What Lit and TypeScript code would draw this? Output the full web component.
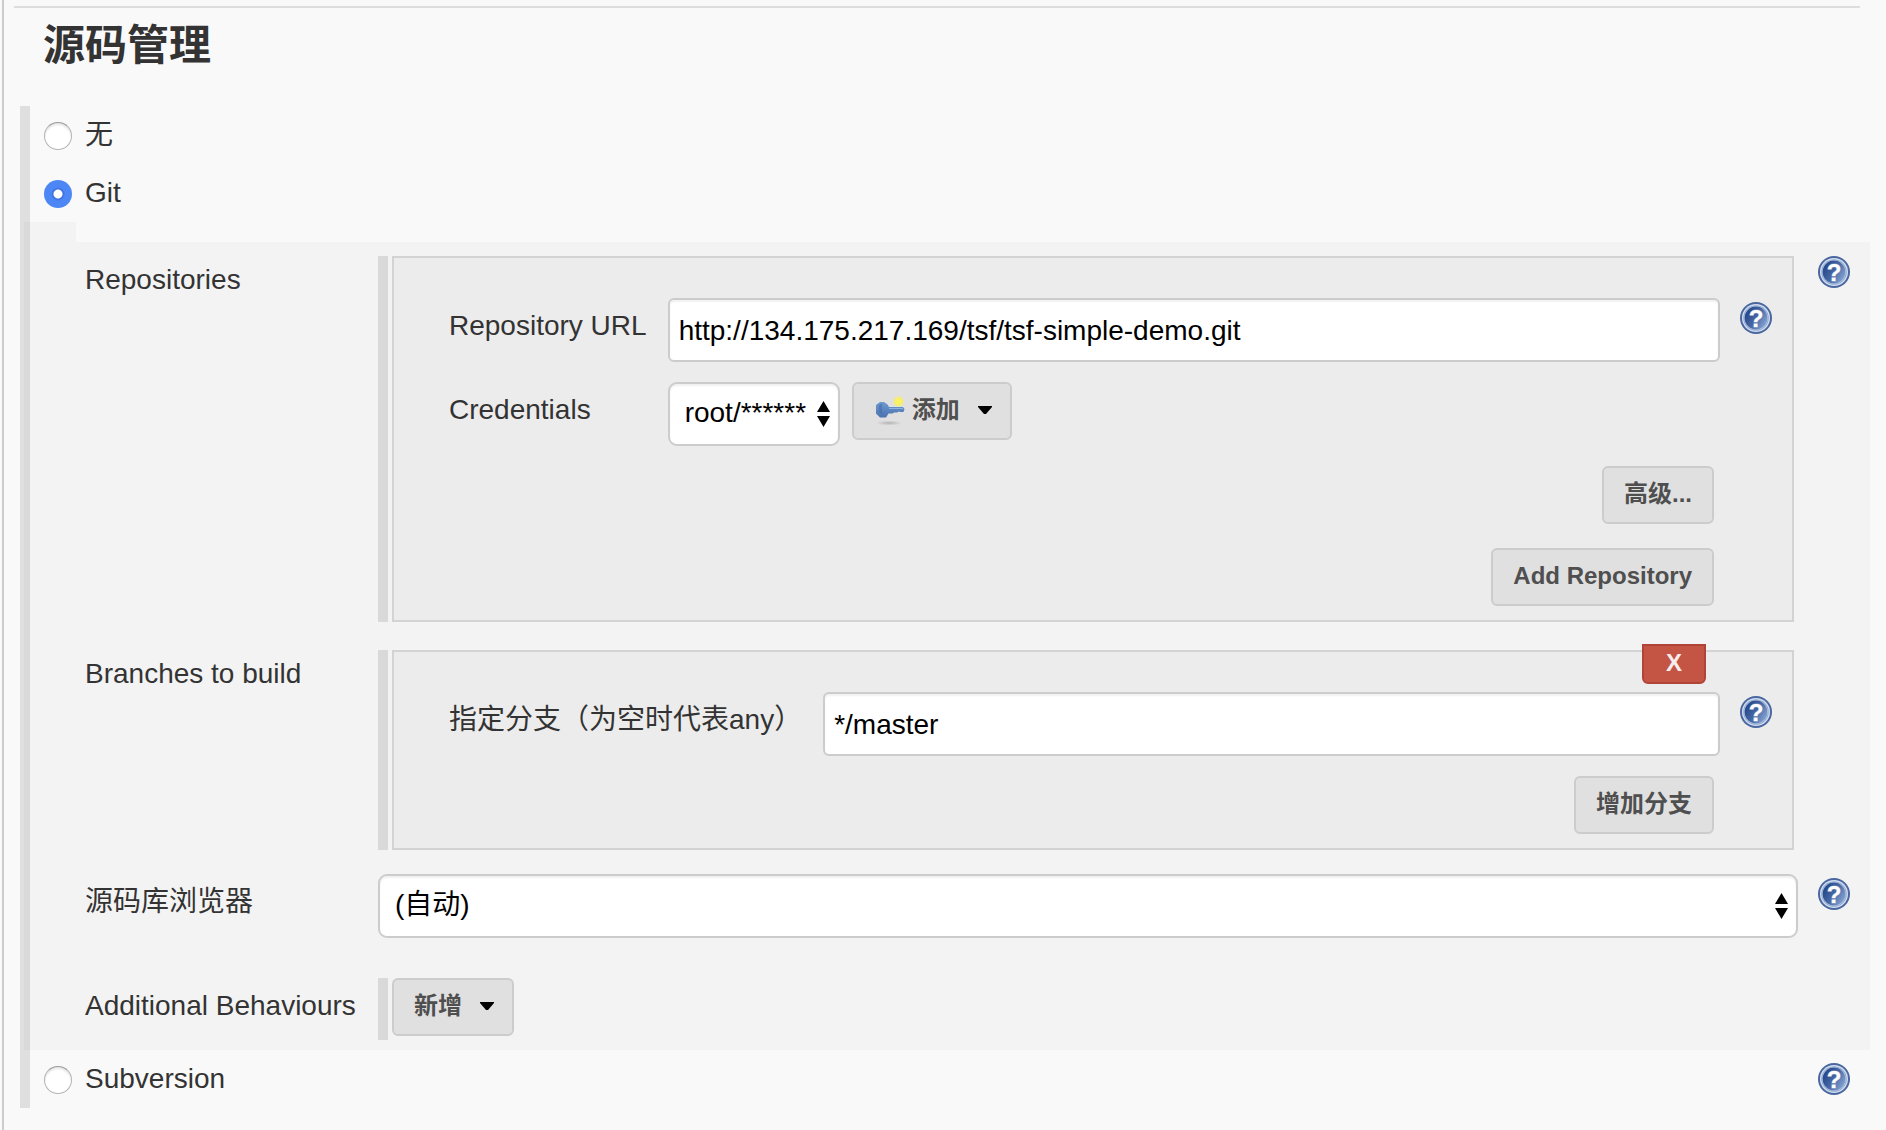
import { LitElement, html, css, svg } from "lit";
import { customElement, property, state } from "lit/decorators.js";

const fontStack = css`"Liberation Sans", "Noto Sans CJK SC", sans-serif`;

/** Round blue help button. */
@customElement("help-button")
export class HelpButton extends LitElement {
  @property() topic = "";

  static styles = css`
    :host {
      display: block;
    }
    .help {
      display: block;
      width: 32px;
      height: 32px;
      padding: 0;
      border: 0;
      background: none;
      cursor: pointer;
    }
    .icon {
      display: block;
      width: 32px;
      height: 32px;
    }
    .mark {
      font-family: ${fontStack};
      font-size: 24px;
      font-weight: 700;
      fill: #fff;
      stroke: #fff;
      stroke-opacity: 0.4;
    }
  `;

  render() {
    return html`
      <button class="help" type="button" aria-label="Help: ${this.topic}">
        <svg class="icon" viewBox="0 0 32 32" aria-hidden="true">
          <defs>
            <linearGradient id="disc" x1="0" y1="0.2" x2="1" y2="0.8">
              <stop offset="0.1" stop-color="#28498a" />
              <stop offset="0.5" stop-color="#4767a4" />
              <stop offset="0.9" stop-color="#7d9ccc" />
            </linearGradient>
          </defs>
          <circle cx="16" cy="16" r="16" fill="#4a679f" />
          <circle cx="16" cy="16" r="14" fill="#d0ddf0" />
          <circle cx="16" cy="16" r="12.6" fill="#7f99c6" />
          <circle cx="16" cy="16" r="12" fill="#b9cae6" />
          <circle cx="16" cy="16" r="11.400" fill="url(#disc)" />
          <text class="mark" x="16" y="25" text-anchor="middle">?</text>
        </svg>
      </button>
    `;
  }
}

const caret = svg`<path d="M0 0H14V1L8 8H6L0 1Z" fill="#000" />`;

@customElement("app-root")
export class AppRoot extends LitElement {
  @state() private scm = "git";

  static styles = css`
    :host {
      display: block;
      box-sizing: border-box;
      min-height: 100vh;
      padding-left: 2px;
      background: #f9f9f9;
      color: #333;
      font-family: ${fontStack};
      font-size: 28px;
      line-height: 32px;
    }
    *,
    *::before {
      box-sizing: border-box;
    }
    .page {
      min-height: 100vh;
      padding: 6px 16px 20px 16px;
      border-left: 2px solid #ccc;
    }
    .rule {
      height: 2px;
      margin: 0 10px 0 -6px;
      border: 0;
      background: #ddd;
    }
    .title {
      margin: 0;
      padding: 14px 0 36px 23px;
      font-size: 42px;
      line-height: 48px;
      font-weight: 700;
    }
    .scm {
      border-left: 10px solid rgba(0, 0, 0, 0.1);
    }
    .option {
      display: flex;
      align-items: center;
      height: 58px;
      padding: 0 20px 0 14px;
    }
    .option-label {
      flex: 1;
      padding-left: 13px;
    }
    .radio {
      appearance: none;
      width: 28px;
      height: 28px;
      margin: 2px 0 0;
      border: 1px solid #b4b4b4;
      border-top-color: #999;
      border-radius: 50%;
      background: #fff;
      box-shadow: inset 0 2px 2px rgba(0, 0, 0, 0.1);
    }
    .radio:checked {
      border: 0;
      background: radial-gradient(circle, #fff 0 4px, #3a6fdc 5px, #4d87f6 7px);
      box-shadow: none;
    }
    .notch,
    .panel {
      margin-left: -6px;
      background: rgba(0, 0, 0, 0.024);
    }
    .notch {
      width: 52px;
      height: 20px;
    }
    .panel {
      padding: 14px 20px 10px 61px;
    }
    .row {
      display: grid;
      grid-template-columns: 293px 1fr 32px;
    }
    .row-block {
      margin-bottom: 28px;
    }
    .row-branch {
      margin-bottom: 24px;
    }
    .row-browser {
      margin-bottom: 40px;
    }
    .label {
      padding-top: 12px;
    }
    .label-block {
      padding-top: 8px;
    }
    .help-field {
      margin-top: 4px;
    }
    .block {
      margin-right: 24px;
      padding-left: 4px;
      border-left: 10px solid #d9d9d9;
    }
    .behaviours {
      display: flex;
      padding-bottom: 4px;
    }
    .card {
      position: relative;
      padding: 40px 20px 14px 55px;
      border: 2px solid #d3d3d3;
      background: #ececec;
    }
    .fields {
      display: grid;
      grid-template-columns: auto 1fr 32px;
      gap: 20px;
    }
    .field-label {
      padding: 12px 1px 0 0;
    }
    .input {
      width: 100%;
      min-width: 0;
      height: 64px;
      padding: 1px 10px 0 9px;
      border: 2px solid #ccc;
      border-radius: 6px;
      background: #fff;
      box-shadow: inset 0 2px 2px rgba(0, 0, 0, 0.06);
      color: #000;
      font: inherit;
    }
    .inline {
      display: flex;
      align-items: flex-start;
      gap: 12px;
    }
    .select-box {
      position: relative;
      display: flex;
    }
    .select-wide {
      margin-right: 20px;
    }
    .select {
      appearance: none;
      width: 100%;
      height: 64px;
      padding: 0 31px 2px 15px;
      border: 2px solid #ccc;
      border-radius: 9px;
      background: #fff;
      box-shadow: inset 0 2px 2px rgba(0, 0, 0, 0.06);
      color: #000;
      font: inherit;
    }
    .arrows {
      position: absolute;
      top: 19px;
      right: 10px;
      width: 13px;
      height: 26px;
      pointer-events: none;
    }
    .actions {
      display: flex;
      flex-direction: column;
      align-items: flex-end;
      gap: 24px;
      margin-top: 20px;
      padding-right: 58px;
    }
    .button {
      display: inline-flex;
      align-items: center;
      height: 58px;
      padding: 0 20px 2px;
      border: 2px solid #ccc;
      border-radius: 6px;
      background: #e0e0e0;
      color: #4f4f4f;
      font: inherit;
      font-size: 24px;
      font-weight: 700;
      cursor: pointer;
    }
    .button-menu {
      gap: 18px;
      padding-right: 18px;
    }
    .button-text {
      display: flex;
      align-items: center;
      gap: 6px;
    }
    .caret {
      width: 14px;
      height: 8px;
    }
    .key {
      width: 32px;
      height: 32px;
    }
    .remove {
      position: absolute;
      top: -8px;
      right: 86px;
      width: 64px;
      height: 40px;
      padding: 0 0 2px;
      border: 2px solid #b04438;
      border-radius: 0 0 6px 6px;
      background: #c45443;
      color: #f6eeee;
      font: inherit;
      font-size: 24px;
      font-weight: 700;
      cursor: pointer;
    }
  `;

  private renderOption(value: string, text: string, help = false) {
    return html`
      <div class="option">
        <input
          class="radio"
          type="radio"
          name="scm"
          id="scm-${value}"
          .checked=${this.scm === value}
          @change=${() => (this.scm = value)}
        />
        <label class="option-label" for="scm-${value}">${text}</label>
        ${help ? html`<help-button topic=${text}></help-button>` : ""}
      </div>
    `;
  }

  private renderArrows() {
    return html`
      <svg class="arrows" viewBox="0 0 13 26" aria-hidden="true">
        <path d="M6.500 0L13 11H0ZM6.500 26L0 15H13Z" fill="#000" />
      </svg>
    `;
  }

  private renderCaret() {
    return html`<svg class="caret" viewBox="0 0 14 8" aria-hidden="true">${caret}</svg>`;
  }

  private renderKey() {
    return html`
      <svg class="key" viewBox="0 0 32 32" aria-hidden="true">
        <defs>
          <linearGradient id="steel" x1="0" y1="0" x2="0" y2="1">
            <stop offset="0" stop-color="#6f9ad0" />
            <stop offset="1" stop-color="#4a72b0" />
          </linearGradient>
          <radialGradient id="spark">
            <stop offset="0" stop-color="#fdf65e" />
            <stop offset="0.6" stop-color="#f6ee6c" />
            <stop offset="1" stop-color="#f6ee6c" stop-opacity="0" />
          </radialGradient>
          <radialGradient id="shade">
            <stop offset="0" stop-color="#000" stop-opacity="0.2" />
            <stop offset="1" stop-color="#000" stop-opacity="0" />
          </radialGradient>
        </defs>
        <ellipse cx="15" cy="29" rx="13" ry="2.500" fill="url(#shade)" />
        <path
          d="M6 8H10L13.500 10.500L15 13H29L30.500 15L29.500 18H26L25 17.500L23 18.500H20L18.500 19.500H14.500L12 23.500H6L2 19.500V11Z"
          fill="url(#steel)"
        />
        <path d="M5 11L8 9.500V20L5 18Z" fill="#3f68a6" opacity="0.5" />
        <path d="M15 14.500H29" stroke="#8fb2de" stroke-width="1" />
        <circle cx="24.500" cy="7.500" r="6" fill="url(#spark)" />
      </svg>
    `;
  }

  private renderGit() {
    return html`
      <div class="notch"></div>
      <section class="panel">
        <div class="row row-block">
          <div class="label-block" id="repositories">Repositories</div>
          <div class="block" role="group" aria-labelledby="repositories">
            <div class="card">
              <div class="fields">
                <label class="field-label" for="url">Repository URL</label>
                <input
                  class="input"
                  id="url"
                  type="text"
                  value="http://134.175.217.169/tsf/tsf-simple-demo.git"
                />
                <help-button class="help-field" topic="Repository URL"></help-button>
                <label class="field-label" for="credentials">Credentials</label>
                <div class="inline">
                  <div class="select-box">
                    <select class="select" id="credentials">
                      <option>root/******</option>
                    </select>
                    ${this.renderArrows()}
                  </div>
                  <button class="button button-menu" type="button">
                    <span class="button-text">${this.renderKey()}添加</span>
                    ${this.renderCaret()}
                  </button>
                </div>
              </div>
              <div class="actions">
                <button class="button" type="button">高级...</button>
                <button class="button" type="button">Add Repository</button>
              </div>
            </div>
          </div>
          <help-button topic="Repositories"></help-button>
        </div>

        <div class="row row-branch">
          <div class="label-block" id="branches">Branches to build</div>
          <div class="block" role="group" aria-labelledby="branches">
            <div class="card">
              <button class="remove" type="button">X</button>
              <div class="fields">
                <label class="field-label" for="branch">指定分支（为空时代表any）</label>
                <input class="input" id="branch" type="text" value="*/master" />
                <help-button class="help-field" topic="Branch"></help-button>
              </div>
              <div class="actions">
                <button class="button" type="button">增加分支</button>
              </div>
            </div>
          </div>
        </div>

        <div class="row row-browser">
          <label class="label" for="browser">源码库浏览器</label>
          <div class="select-box select-wide">
            <select class="select" id="browser">
              <option>(自动)</option>
            </select>
            ${this.renderArrows()}
          </div>
          <help-button class="help-field" topic="源码库浏览器"></help-button>
        </div>

        <div class="row">
          <div class="label" id="behaviours">Additional Behaviours</div>
          <div class="block" role="group" aria-labelledby="behaviours">
            <div class="behaviours">
              <button class="button button-menu" type="button">
                <span class="button-text">新增</span>
                ${this.renderCaret()}
              </button>
            </div>
          </div>
        </div>
      </section>
    `;
  }

  render() {
    return html`
      <main class="page">
        <hr class="rule" />
        <h1 class="title">源码管理</h1>
        <div class="scm">
          ${this.renderOption("none", "无")} ${this.renderOption("git", "Git")}
          ${this.scm === "git" ? this.renderGit() : ""}
          ${this.renderOption("svn", "Subversion", true)}
        </div>
      </main>
    `;
  }
}
